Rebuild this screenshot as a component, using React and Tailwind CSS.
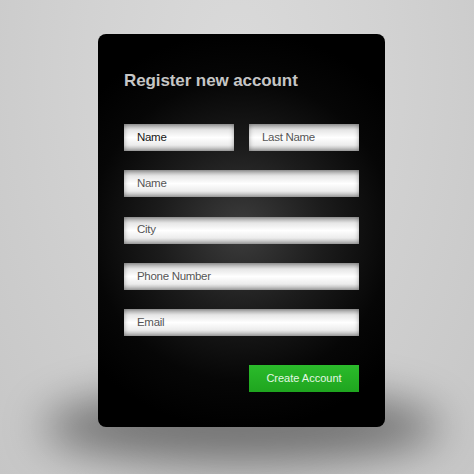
const FIELDS = ['Name', 'City', 'Phone Number', 'Email']

function Field({ label, dark, className = '' }) {
  return (
    <div
      className={`h-[27px] flex items-center pl-[13px] text-[11.5px] tracking-[-0.3px] bg-[linear-gradient(to_bottom,#a9a9a9_0%,#e6e6e6_22%,#ffffff_50%,#ececec_78%,#b4b4b4_100%)] shadow-[inset_0_0_5px_rgba(0,0,0,0.35)] ${
        dark ? 'text-[#151515]' : 'text-[#555555]'
      } ${className}`}
    >
      {label}
    </div>
  )
}

export default function App() {
  return (
    <div className="w-[474px] h-[474px] overflow-hidden bg-[radial-gradient(ellipse_at_50%_15%,#dadada_0%,#d2d2d2_45%,#c6c6c6_100%)] pt-[34px] pl-[98px] font-['Liberation_Sans',Arial,sans-serif]">
      <div className="relative w-[287px] h-[393px]">
        {/* floor shadow */}
        <div className="absolute left-[-55px] right-[-55px] bottom-[-38px] h-[76px] rounded-[50%] bg-[#444444] opacity-65 blur-[22px]" />

        <div className="relative h-full rounded-[8px] bg-[radial-gradient(circle_at_50%_50%,#3d3d3d_0%,#1c1c1c_34%,#060606_62%,#000000_82%)] px-[26px] pt-[36px]">
          <h1 className="text-[17px] leading-[22px] font-bold text-[#c6c6c6] tracking-[-0.1px]">Register new account</h1>

          <div className="mt-[32px] flex gap-[15px]">
            <Field label="Name" dark className="w-[110px]" />
            <Field label="Last Name" className="w-[110px]" />
          </div>

          {FIELDS.map(f => (
            <Field key={f} label={f} className="mt-[19.3px]" />
          ))}

          <div className="mt-[29px] flex justify-end">
            <button className="w-[110px] h-[27px] bg-[linear-gradient(to_bottom,#2bbb2b,#1fa51f)] text-[11px] text-[#e4f7e4]">
              Create Account
            </button>
          </div>
        </div>
      </div>
    </div>
  )
}
